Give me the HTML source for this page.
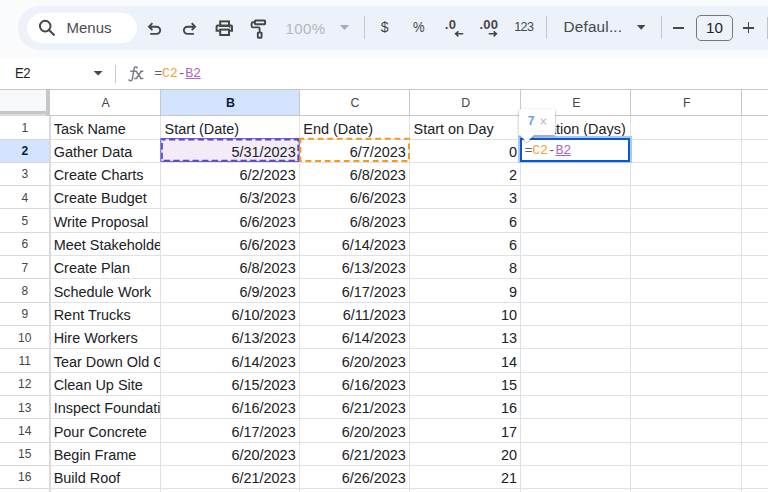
<!DOCTYPE html><html><head><meta charset="utf-8"><style>
*{margin:0;padding:0;box-sizing:border-box}
html,body{width:768px;height:492px;overflow:hidden;background:#f9fbfd;font-family:"Liberation Sans",sans-serif;position:relative}
.a{position:absolute}
.t{position:absolute;white-space:nowrap;line-height:16px;height:16px}
.hl{position:absolute;height:1px;background:#e1e1e1}
.vl{position:absolute;width:1px;background:#e1e1e1}
svg{position:absolute;overflow:visible}
</style></head><body>
<div class="a" style="left:17.7px;top:5.5px;width:800px;height:44px;background:#edf2fa;border-radius:22px"></div>
<div class="a" style="left:27px;top:12.5px;width:110px;height:30px;background:#fff;border-radius:15px"></div>
<svg style="left:0;top:0" width="768" height="60"><circle cx="45.2" cy="26.1" r="5.3" fill="none" stroke="#444746" stroke-width="2"/><line x1="49" y1="30" x2="53.8" y2="34.8" stroke="#444746" stroke-width="2.1" stroke-linecap="square"/></svg>
<div class="t" style="left:66.5px;top:19.50px;font-size:15.0px;color:#4a4d50;font-weight:normal;">Menus</div>
<svg style="left:0;top:0" width="768" height="60"><path d="M152.4 23.2 L149 26.7 L152.4 30.2 M149.3 26.7 H156.6 A3.6 3.6 0 0 1 156.6 33.9 H150.2" fill="none" stroke="#444746" stroke-width="1.9"/><path d="M191.7 23.2 L195.1 26.7 L191.7 30.2 M194.8 26.7 H187.5 A3.6 3.6 0 0 0 187.5 33.9 H193.9" fill="none" stroke="#444746" stroke-width="1.9"/></svg>
<svg style="left:0;top:0" width="768" height="60"><rect x="220.2" y="21.4" width="8.8" height="4.6" fill="none" stroke="#444746" stroke-width="2"/><path d="M219.6 30.8 H216.6 V26.5 Q216.6 25.5 217.6 25.5 H231 Q232 25.5 232 26.5 V30.8 H229" fill="none" stroke="#444746" stroke-width="2"/><rect x="220.2" y="29.6" width="8.8" height="5.4" fill="none" stroke="#444746" stroke-width="2"/><circle cx="230" cy="27.6" r="0.7" fill="#444746"/></svg>
<svg style="left:0;top:0" width="768" height="60"><rect x="254.9" y="20.6" width="10.2" height="3.6" rx="0.6" fill="none" stroke="#444746" stroke-width="2"/><path d="M254.5 22.3 H253 Q251.6 22.3 251.6 23.7 V25.9 Q251.6 27.4 253 27.4 H258.4 Q259.6 27.4 259.6 28.6 V32.5" fill="none" stroke="#444746" stroke-width="1.9"/><rect x="257.8" y="32.6" width="3.8" height="5.2" rx="0.5" fill="none" stroke="#444746" stroke-width="1.9"/></svg>
<div class="t" style="left:285.6px;top:20.67px;font-size:15.1px;color:#b4b8bd;font-weight:normal;letter-spacing:0.3px">100%</div>
<svg style="left:0;top:0" width="768" height="60"><path d="M339.8 25.1 H349.2 L344.5 29.9 Z" fill="#a9adb2"/></svg>
<div class="a" style="left:363.7px;top:16.4px;width:1px;height:22.2px;background:#c7c7c7"></div>
<div class="a" style="left:545.8px;top:16.4px;width:1px;height:22.2px;background:#c7c7c7"></div>
<div class="a" style="left:661.3px;top:16.4px;width:1px;height:22.2px;background:#c7c7c7"></div>
<div class="t" style="left:380.8px;top:19.38px;font-size:14.2px;color:#444746;font-weight:normal;">$</div>
<div class="t" style="left:413.0px;top:19.28px;font-size:14.5px;color:#444746;font-weight:normal;transform:scaleX(0.9);transform-origin:0 0">%</div>
<div class="t" style="left:444.8px;top:16.70px;font-size:13.0px;color:#444746;font-weight:bold;letter-spacing:0.3px">.0</div>
<div class="t" style="left:479.4px;top:16.70px;font-size:13.0px;color:#444746;font-weight:bold;letter-spacing:0.3px">.00</div>
<svg style="left:0;top:0" width="768" height="60"><path d="M463.2 33.8 H455.8 M458.4 31.3 L455.6 33.8 L458.4 36.3" fill="none" stroke="#444746" stroke-width="1.6"/><path d="M488.8 33.8 H496.2 M493.6 31.3 L496.4 33.8 L493.6 36.3" fill="none" stroke="#444746" stroke-width="1.6"/></svg>
<div class="t" style="left:514.3px;top:19.43px;font-size:12.6px;color:#444746;font-weight:normal;letter-spacing:-0.7px">123</div>
<div class="t" style="left:563.5px;top:18.70px;font-size:15.3px;color:#444746;font-weight:normal;letter-spacing:0.2px">Defaul...</div>
<svg style="left:0;top:0" width="768" height="60"><path d="M636.9 25 H645.5 L641.2 29.8 Z" fill="#444746"/></svg>
<div class="a" style="left:673.2px;top:27px;width:11.2px;height:1.8px;background:#444746"></div>
<div class="a" style="left:696.1px;top:14.7px;width:36.5px;height:25.9px;border:1px solid #747775;border-radius:5px"></div>
<div class="t" style="left:706.0px;top:20.03px;font-size:15.2px;color:#1f1f1f;font-weight:normal;">10</div>
<div class="a" style="left:743.2px;top:27px;width:10.8px;height:1.8px;background:#444746"></div>
<div class="a" style="left:747.7px;top:22.4px;width:1.8px;height:10.9px;background:#444746"></div>
<div class="a" style="left:766.6px;top:16.6px;width:1.4px;height:22.2px;background:#c2c4c6"></div>
<div class="a" style="left:0;top:57.8px;width:768px;height:32px;background:#fff"></div>
<div class="t" style="left:14.9px;top:64.94px;font-size:14.6px;color:#1f1f1f;font-weight:normal;letter-spacing:-0.5px;transform:scaleX(0.9);transform-origin:0 0">E2</div>
<svg style="left:0;top:0" width="768" height="90"><path d="M93.6 70.9 H102.6 L98.1 75.5 Z" fill="#444746"/></svg>
<div class="a" style="left:115px;top:65.3px;width:1px;height:17.8px;background:#c7c7c7"></div>
<svg style="left:0;top:0" width="768" height="90"><g fill="none" stroke="#7a7e82" stroke-width="1.5"><path d="M137.4 68.6 Q137.2 66.6 135.6 66.7 Q134.4 66.8 134.1 69 L132.3 79.2 Q131.9 80.9 130.4 80.8 Q129 80.7 128.8 79.4"/><path d="M130.3 71.3 H136.6 M134.4 71.3 H137.3 M140 71.3 H143.3 M134.2 78.6 H137.3 M140 78.6 H143.4 M136.2 71.3 L141.3 78.6 M141.3 71.3 L136.2 78.6"/></g></svg>
<div class="t" style="left:154.3px;top:65.66px;font-size:13.4px;color:#5f6368;font-weight:normal;letter-spacing:-0.3px;font-family:'Liberation Mono',monospace"><span style="color:#5f6368">=</span><span style="color:#f6a132">C2</span><span style="color:#5f6368">-</span><span style="color:#a66bc4;text-decoration:underline;text-underline-offset:1px">B2</span></div>
<div class="a" style="left:0;top:89.5px;width:768px;height:402.5px;background:#fff"></div>
<div class="a" style="left:0;top:89.5px;width:49.5px;height:26.200000000000003px;background:#f8f9fa"></div>
<div class="a" style="left:160.3px;top:89.5px;width:138.8px;height:26.200000000000003px;background:#d3e3fd"></div>
<div class="a" style="left:0;top:139.02px;width:49.5px;height:23.32px;background:#d3e3fd"></div>
<div class="hl" style="left:0;top:89.0px;width:768px;background:#c7c7c7"></div>
<div class="hl" style="left:0;top:115.20px;width:768px"></div>
<div class="hl" style="left:0;top:138.52px;width:768px"></div>
<div class="hl" style="left:0;top:161.84px;width:768px"></div>
<div class="hl" style="left:0;top:185.16px;width:768px"></div>
<div class="hl" style="left:0;top:208.48px;width:768px"></div>
<div class="hl" style="left:0;top:231.80px;width:768px"></div>
<div class="hl" style="left:0;top:255.12px;width:768px"></div>
<div class="hl" style="left:0;top:278.44px;width:768px"></div>
<div class="hl" style="left:0;top:301.76px;width:768px"></div>
<div class="hl" style="left:0;top:325.08px;width:768px"></div>
<div class="hl" style="left:0;top:348.40px;width:768px"></div>
<div class="hl" style="left:0;top:371.72px;width:768px"></div>
<div class="hl" style="left:0;top:395.04px;width:768px"></div>
<div class="hl" style="left:0;top:418.36px;width:768px"></div>
<div class="hl" style="left:0;top:441.68px;width:768px"></div>
<div class="hl" style="left:0;top:465.00px;width:768px"></div>
<div class="hl" style="left:0;top:488.32px;width:768px"></div>
<div class="vl" style="left:49.0px;top:89.5px;height:402.5px"></div>
<div class="vl" style="left:159.8px;top:89.5px;height:402.5px"></div>
<div class="vl" style="left:298.6px;top:89.5px;height:402.5px"></div>
<div class="vl" style="left:408.8px;top:89.5px;height:402.5px"></div>
<div class="vl" style="left:520.0px;top:89.5px;height:402.5px"></div>
<div class="vl" style="left:630.0px;top:89.5px;height:402.5px"></div>
<div class="vl" style="left:740.9px;top:89.5px;height:402.5px"></div>
<div class="hl" style="left:0;top:115.20px;width:768px;background:#c7c7c7"></div>
<div class="vl" style="left:49.0px;top:89.5px;height:26.200000000000003px;background:#c7c7c7"></div>
<div class="vl" style="left:159.8px;top:89.5px;height:26.200000000000003px;background:#c7c7c7"></div>
<div class="vl" style="left:298.6px;top:89.5px;height:26.200000000000003px;background:#c7c7c7"></div>
<div class="vl" style="left:408.8px;top:89.5px;height:26.200000000000003px;background:#c7c7c7"></div>
<div class="vl" style="left:520.0px;top:89.5px;height:26.200000000000003px;background:#c7c7c7"></div>
<div class="vl" style="left:630.0px;top:89.5px;height:26.200000000000003px;background:#c7c7c7"></div>
<div class="vl" style="left:740.9px;top:89.5px;height:26.200000000000003px;background:#c7c7c7"></div>
<div class="vl" style="left:49px;top:115.7px;width:2px;height:376.3px;background:#dadada"></div>
<div class="hl" style="left:0;top:138.52px;width:49px;background:#d6d6d6"></div>
<div class="hl" style="left:0;top:161.84px;width:49px;background:#d6d6d6"></div>
<div class="hl" style="left:0;top:185.16px;width:49px;background:#d6d6d6"></div>
<div class="hl" style="left:0;top:208.48px;width:49px;background:#d6d6d6"></div>
<div class="hl" style="left:0;top:231.80px;width:49px;background:#d6d6d6"></div>
<div class="hl" style="left:0;top:255.12px;width:49px;background:#d6d6d6"></div>
<div class="hl" style="left:0;top:278.44px;width:49px;background:#d6d6d6"></div>
<div class="hl" style="left:0;top:301.76px;width:49px;background:#d6d6d6"></div>
<div class="hl" style="left:0;top:325.08px;width:49px;background:#d6d6d6"></div>
<div class="hl" style="left:0;top:348.40px;width:49px;background:#d6d6d6"></div>
<div class="hl" style="left:0;top:371.72px;width:49px;background:#d6d6d6"></div>
<div class="hl" style="left:0;top:395.04px;width:49px;background:#d6d6d6"></div>
<div class="hl" style="left:0;top:418.36px;width:49px;background:#d6d6d6"></div>
<div class="hl" style="left:0;top:441.68px;width:49px;background:#d6d6d6"></div>
<div class="hl" style="left:0;top:465.00px;width:49px;background:#d6d6d6"></div>
<div class="hl" style="left:0;top:488.32px;width:49px;background:#d6d6d6"></div>
<div class="a" style="left:46px;top:89.5px;width:4px;height:25.700000000000003px;background:#c7c7c7"></div>
<div class="a" style="left:0;top:110.8px;width:50px;height:3.4px;background:#c7c7c7"></div>
<div class="a" style="left:0;top:114.2px;width:46px;height:1.6px;background:#dcdcdc"></div>
<div class="t" style="left:50.30px;width:110.80000000000001px;text-align:center;top:94.70px;font-size:12.4px;color:#444746;font-weight:normal">A</div>
<div class="t" style="left:161.10px;width:138.8px;text-align:center;top:94.70px;font-size:12.4px;color:#041e49;font-weight:bold">B</div>
<div class="t" style="left:299.90px;width:110.19999999999999px;text-align:center;top:94.70px;font-size:12.4px;color:#444746;font-weight:normal">C</div>
<div class="t" style="left:410.10px;width:111.19999999999999px;text-align:center;top:94.70px;font-size:12.4px;color:#444746;font-weight:normal">D</div>
<div class="t" style="left:521.30px;width:110.0px;text-align:center;top:94.70px;font-size:12.4px;color:#444746;font-weight:normal">E</div>
<div class="t" style="left:631.30px;width:110.89999999999998px;text-align:center;top:94.70px;font-size:12.4px;color:#444746;font-weight:normal">F</div>
<div class="t" style="left:0;width:49.5px;text-align:center;top:119.66px;font-size:12px;color:#444746;font-weight:normal">1</div>
<div class="t" style="left:0;width:49.5px;text-align:center;top:142.98px;font-size:12px;color:#041e49;font-weight:bold">2</div>
<div class="t" style="left:0;width:49.5px;text-align:center;top:166.30px;font-size:12px;color:#444746;font-weight:normal">3</div>
<div class="t" style="left:0;width:49.5px;text-align:center;top:189.62px;font-size:12px;color:#444746;font-weight:normal">4</div>
<div class="t" style="left:0;width:49.5px;text-align:center;top:212.94px;font-size:12px;color:#444746;font-weight:normal">5</div>
<div class="t" style="left:0;width:49.5px;text-align:center;top:236.26px;font-size:12px;color:#444746;font-weight:normal">6</div>
<div class="t" style="left:0;width:49.5px;text-align:center;top:259.58px;font-size:12px;color:#444746;font-weight:normal">7</div>
<div class="t" style="left:0;width:49.5px;text-align:center;top:282.90px;font-size:12px;color:#444746;font-weight:normal">8</div>
<div class="t" style="left:0;width:49.5px;text-align:center;top:306.22px;font-size:12px;color:#444746;font-weight:normal">9</div>
<div class="t" style="left:0;width:49.5px;text-align:center;top:329.54px;font-size:12px;color:#444746;font-weight:normal">10</div>
<div class="t" style="left:0;width:49.5px;text-align:center;top:352.86px;font-size:12px;color:#444746;font-weight:normal">11</div>
<div class="t" style="left:0;width:49.5px;text-align:center;top:376.18px;font-size:12px;color:#444746;font-weight:normal">12</div>
<div class="t" style="left:0;width:49.5px;text-align:center;top:399.50px;font-size:12px;color:#444746;font-weight:normal">13</div>
<div class="t" style="left:0;width:49.5px;text-align:center;top:422.82px;font-size:12px;color:#444746;font-weight:normal">14</div>
<div class="t" style="left:0;width:49.5px;text-align:center;top:446.14px;font-size:12px;color:#444746;font-weight:normal">15</div>
<div class="t" style="left:0;width:49.5px;text-align:center;top:469.46px;font-size:12px;color:#444746;font-weight:normal">16</div>
<div class="a" style="left:160.3px;top:138.2px;width:139.2px;height:23.6px;background:#f3ebf6"></div>
<svg style="left:0;top:0" width="768" height="200"><rect x="160.8" y="138.6" width="138.4" height="22.8" fill="none" stroke="#3f63e0" stroke-width="1"/><rect x="162" y="139.6" width="136.2" height="21" fill="none" stroke="#6d3fba" stroke-width="1.7" stroke-dasharray="6.3 3.3" stroke-dashoffset="2.6"/><rect x="300.4" y="138.8" width="108.6" height="22.2" fill="none" stroke="#f49a1f" stroke-width="2" stroke-dasharray="5.9 3.7" stroke-dashoffset="2"/></svg>
<div class="t" style="left:53.70px;width:106.60px;overflow:hidden;top:120.51px;font-size:14.45px;color:#202124">Task Name</div>
<div class="t" style="left:164.50px;width:134.60px;overflow:hidden;top:120.51px;font-size:14.45px;color:#202124">Start (Date)</div>
<div class="t" style="left:303.30px;width:106.00px;overflow:hidden;top:120.51px;font-size:14.45px;color:#202124">End (Date)</div>
<div class="t" style="left:413.50px;width:107.00px;overflow:hidden;top:120.51px;font-size:14.45px;color:#202124">Start on Day</div>
<div class="t" style="left:524.70px;width:105.80px;overflow:hidden;top:120.51px;font-size:14.45px;color:#202124">Duration (Days)</div>
<div class="t" style="left:53.70px;width:106.60px;overflow:hidden;top:143.83px;font-size:14.45px;color:#202124">Gather Data</div>
<div class="t" style="left:160.3px;width:135.40px;text-align:right;top:143.83px;font-size:14.45px;color:#202124">5/31/2023</div>
<div class="t" style="left:299.1px;width:106.80px;text-align:right;top:143.83px;font-size:14.45px;color:#202124">6/7/2023</div>
<div class="t" style="left:409.3px;width:107.80px;text-align:right;top:143.83px;font-size:14.45px;color:#202124">0</div>
<div class="t" style="left:53.70px;width:106.60px;overflow:hidden;top:167.15px;font-size:14.45px;color:#202124">Create Charts</div>
<div class="t" style="left:160.3px;width:135.40px;text-align:right;top:167.15px;font-size:14.45px;color:#202124">6/2/2023</div>
<div class="t" style="left:299.1px;width:106.80px;text-align:right;top:167.15px;font-size:14.45px;color:#202124">6/8/2023</div>
<div class="t" style="left:409.3px;width:107.80px;text-align:right;top:167.15px;font-size:14.45px;color:#202124">2</div>
<div class="t" style="left:53.70px;width:106.60px;overflow:hidden;top:190.47px;font-size:14.45px;color:#202124">Create Budget</div>
<div class="t" style="left:160.3px;width:135.40px;text-align:right;top:190.47px;font-size:14.45px;color:#202124">6/3/2023</div>
<div class="t" style="left:299.1px;width:106.80px;text-align:right;top:190.47px;font-size:14.45px;color:#202124">6/6/2023</div>
<div class="t" style="left:409.3px;width:107.80px;text-align:right;top:190.47px;font-size:14.45px;color:#202124">3</div>
<div class="t" style="left:53.70px;width:106.60px;overflow:hidden;top:213.79px;font-size:14.45px;color:#202124">Write Proposal</div>
<div class="t" style="left:160.3px;width:135.40px;text-align:right;top:213.79px;font-size:14.45px;color:#202124">6/6/2023</div>
<div class="t" style="left:299.1px;width:106.80px;text-align:right;top:213.79px;font-size:14.45px;color:#202124">6/8/2023</div>
<div class="t" style="left:409.3px;width:107.80px;text-align:right;top:213.79px;font-size:14.45px;color:#202124">6</div>
<div class="t" style="left:53.70px;width:106.60px;overflow:hidden;top:237.11px;font-size:14.45px;color:#202124">Meet Stakeholders</div>
<div class="t" style="left:160.3px;width:135.40px;text-align:right;top:237.11px;font-size:14.45px;color:#202124">6/6/2023</div>
<div class="t" style="left:299.1px;width:106.80px;text-align:right;top:237.11px;font-size:14.45px;color:#202124">6/14/2023</div>
<div class="t" style="left:409.3px;width:107.80px;text-align:right;top:237.11px;font-size:14.45px;color:#202124">6</div>
<div class="t" style="left:53.70px;width:106.60px;overflow:hidden;top:260.43px;font-size:14.45px;color:#202124">Create Plan</div>
<div class="t" style="left:160.3px;width:135.40px;text-align:right;top:260.43px;font-size:14.45px;color:#202124">6/8/2023</div>
<div class="t" style="left:299.1px;width:106.80px;text-align:right;top:260.43px;font-size:14.45px;color:#202124">6/13/2023</div>
<div class="t" style="left:409.3px;width:107.80px;text-align:right;top:260.43px;font-size:14.45px;color:#202124">8</div>
<div class="t" style="left:53.70px;width:106.60px;overflow:hidden;top:283.75px;font-size:14.45px;color:#202124">Schedule Work</div>
<div class="t" style="left:160.3px;width:135.40px;text-align:right;top:283.75px;font-size:14.45px;color:#202124">6/9/2023</div>
<div class="t" style="left:299.1px;width:106.80px;text-align:right;top:283.75px;font-size:14.45px;color:#202124">6/17/2023</div>
<div class="t" style="left:409.3px;width:107.80px;text-align:right;top:283.75px;font-size:14.45px;color:#202124">9</div>
<div class="t" style="left:53.70px;width:106.60px;overflow:hidden;top:307.07px;font-size:14.45px;color:#202124">Rent Trucks</div>
<div class="t" style="left:160.3px;width:135.40px;text-align:right;top:307.07px;font-size:14.45px;color:#202124">6/10/2023</div>
<div class="t" style="left:299.1px;width:106.80px;text-align:right;top:307.07px;font-size:14.45px;color:#202124">6/11/2023</div>
<div class="t" style="left:409.3px;width:107.80px;text-align:right;top:307.07px;font-size:14.45px;color:#202124">10</div>
<div class="t" style="left:53.70px;width:106.60px;overflow:hidden;top:330.39px;font-size:14.45px;color:#202124">Hire Workers</div>
<div class="t" style="left:160.3px;width:135.40px;text-align:right;top:330.39px;font-size:14.45px;color:#202124">6/13/2023</div>
<div class="t" style="left:299.1px;width:106.80px;text-align:right;top:330.39px;font-size:14.45px;color:#202124">6/14/2023</div>
<div class="t" style="left:409.3px;width:107.80px;text-align:right;top:330.39px;font-size:14.45px;color:#202124">13</div>
<div class="t" style="left:53.70px;width:106.60px;overflow:hidden;top:353.71px;font-size:14.45px;color:#202124">Tear Down Old Garage</div>
<div class="t" style="left:160.3px;width:135.40px;text-align:right;top:353.71px;font-size:14.45px;color:#202124">6/14/2023</div>
<div class="t" style="left:299.1px;width:106.80px;text-align:right;top:353.71px;font-size:14.45px;color:#202124">6/20/2023</div>
<div class="t" style="left:409.3px;width:107.80px;text-align:right;top:353.71px;font-size:14.45px;color:#202124">14</div>
<div class="t" style="left:53.70px;width:106.60px;overflow:hidden;top:377.03px;font-size:14.45px;color:#202124">Clean Up Site</div>
<div class="t" style="left:160.3px;width:135.40px;text-align:right;top:377.03px;font-size:14.45px;color:#202124">6/15/2023</div>
<div class="t" style="left:299.1px;width:106.80px;text-align:right;top:377.03px;font-size:14.45px;color:#202124">6/16/2023</div>
<div class="t" style="left:409.3px;width:107.80px;text-align:right;top:377.03px;font-size:14.45px;color:#202124">15</div>
<div class="t" style="left:53.70px;width:106.60px;overflow:hidden;top:400.35px;font-size:14.45px;color:#202124">Inspect Foundation</div>
<div class="t" style="left:160.3px;width:135.40px;text-align:right;top:400.35px;font-size:14.45px;color:#202124">6/16/2023</div>
<div class="t" style="left:299.1px;width:106.80px;text-align:right;top:400.35px;font-size:14.45px;color:#202124">6/21/2023</div>
<div class="t" style="left:409.3px;width:107.80px;text-align:right;top:400.35px;font-size:14.45px;color:#202124">16</div>
<div class="t" style="left:53.70px;width:106.60px;overflow:hidden;top:423.67px;font-size:14.45px;color:#202124">Pour Concrete</div>
<div class="t" style="left:160.3px;width:135.40px;text-align:right;top:423.67px;font-size:14.45px;color:#202124">6/17/2023</div>
<div class="t" style="left:299.1px;width:106.80px;text-align:right;top:423.67px;font-size:14.45px;color:#202124">6/20/2023</div>
<div class="t" style="left:409.3px;width:107.80px;text-align:right;top:423.67px;font-size:14.45px;color:#202124">17</div>
<div class="t" style="left:53.70px;width:106.60px;overflow:hidden;top:446.99px;font-size:14.45px;color:#202124">Begin Frame</div>
<div class="t" style="left:160.3px;width:135.40px;text-align:right;top:446.99px;font-size:14.45px;color:#202124">6/20/2023</div>
<div class="t" style="left:299.1px;width:106.80px;text-align:right;top:446.99px;font-size:14.45px;color:#202124">6/21/2023</div>
<div class="t" style="left:409.3px;width:107.80px;text-align:right;top:446.99px;font-size:14.45px;color:#202124">20</div>
<div class="t" style="left:53.70px;width:106.60px;overflow:hidden;top:470.31px;font-size:14.45px;color:#202124">Build Roof</div>
<div class="t" style="left:160.3px;width:135.40px;text-align:right;top:470.31px;font-size:14.45px;color:#202124">6/21/2023</div>
<div class="t" style="left:299.1px;width:106.80px;text-align:right;top:470.31px;font-size:14.45px;color:#202124">6/26/2023</div>
<div class="t" style="left:409.3px;width:107.80px;text-align:right;top:470.31px;font-size:14.45px;color:#202124">21</div>
<div class="a" style="left:517.9px;top:135.8px;width:114px;height:27.6px;background:#a8c7fa"></div>
<div class="a" style="left:519.9px;top:137.6px;width:110.4px;height:24px;border:2px solid #0b57d0;background:#fff"></div>
<div class="t" style="left:524.6px;top:143.26px;font-size:13.4px;color:#5f6368;font-weight:normal;letter-spacing:-0.3px;font-family:'Liberation Mono',monospace"><span style="color:#5f6368">=</span><span style="color:#f6a132">C2</span><span style="color:#5f6368">-</span><span style="color:#a66bc4;text-decoration:underline;text-underline-offset:1px">B2</span></div>
<div class="a" style="left:519.4px;top:108.8px;width:35.8px;height:26px;background:#fff;border-radius:1.5px;box-shadow:0 1px 1.5px rgba(60,64,67,0.45),0 1px 3px 1px rgba(60,64,67,0.12)"></div>
<div class="a" style="left:522.3px;top:129.8px;width:9.6px;height:9.6px;background:#fff;transform:rotate(45deg);box-shadow:1px 1px 2px rgba(60,64,67,0.3)"></div>
<div class="a" style="left:519.2px;top:125px;width:35.7px;height:10px;background:#fff"></div>
<div class="t" style="left:527.7px;top:112.57px;font-size:12.2px;color:#6b9cf2;font-weight:bold;">7</div>
<svg style="left:0;top:0" width="768" height="200"><path d="M540.8 118.6 L546 124.4 M546 118.6 L540.8 124.4" stroke="#b5b9bd" stroke-width="1.1"/></svg>
</body></html>
